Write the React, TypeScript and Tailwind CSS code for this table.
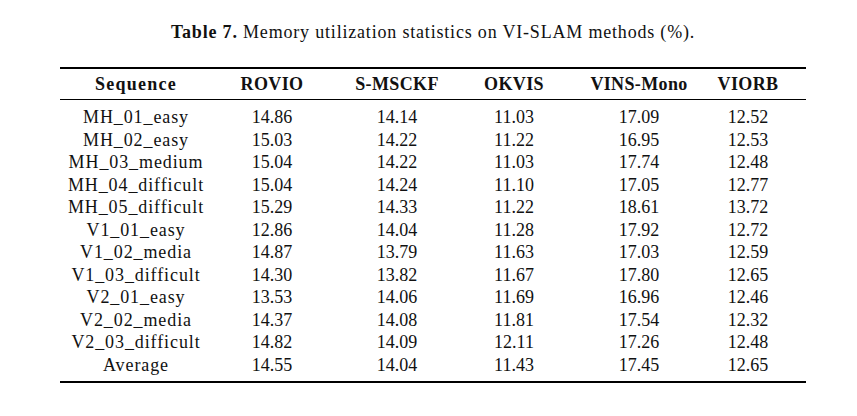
import React from 'react';

const headers = ['Sequence', 'ROVIO', 'S-MSCKF', 'OKVIS', 'VINS-Mono', 'VIORB'];

const rows: string[][] = [
  ['MH_01_easy', '14.86', '14.14', '11.03', '17.09', '12.52'],
  ['MH_02_easy', '15.03', '14.22', '11.22', '16.95', '12.53'],
  ['MH_03_medium', '15.04', '14.22', '11.03', '17.74', '12.48'],
  ['MH_04_difficult', '15.04', '14.24', '11.10', '17.05', '12.77'],
  ['MH_05_difficult', '15.29', '14.33', '11.22', '18.61', '13.72'],
  ['V1_01_easy', '12.86', '14.04', '11.28', '17.92', '12.72'],
  ['V1_02_media', '14.87', '13.79', '11.63', '17.03', '12.59'],
  ['V1_03_difficult', '14.30', '13.82', '11.67', '17.80', '12.65'],
  ['V2_01_easy', '13.53', '14.06', '11.69', '16.96', '12.46'],
  ['V2_02_media', '14.37', '14.08', '11.81', '17.54', '12.32'],
  ['V2_03_difficult', '14.82', '14.09', '12.11', '17.26', '12.48'],
  ['Average', '14.55', '14.04', '11.43', '17.45', '12.65'],
];

const cols = 'grid grid-cols-[152px_120px_130px_104px_146px_72px]';

export default function App() {
  return (
    <div className="w-[857px] h-[416px] bg-white text-[#111] font-['Liberation_Serif',serif] overflow-hidden">
      <div className="pt-[21px] pl-[9px] h-[43px] text-center text-[18px] leading-[22px] tracking-[0.045em]">
        <span className="font-bold">Table 7.</span> Memory utilization statistics on VI-SLAM methods (%).
      </div>

      <div className="ml-[60px] mt-[24px] w-[746px] border-t-2 border-b-2 border-black pb-[5px]">
        <div className={`${cols} h-[31px] items-center border-b border-black text-[18px] font-bold`}>
          {headers.map((h, i) => (
            <div key={h} className={`text-center whitespace-nowrap ${i === 0 ? 'tracking-[0.07em]' : 'tracking-[0.02em]'}`}>
              {h}
            </div>
          ))}
        </div>

        <div className="pt-[6px]">
          {rows.map((r) => (
            <div key={r[0]} className={`${cols} h-[22.5px] items-center text-[18px] leading-[22px]`}>
              {r.map((c, i) => (
                <div key={i} className={`text-center whitespace-nowrap ${i === 0 ? 'tracking-[0.05em]' : ''}`}>
                  {c}
                </div>
              ))}
            </div>
          ))}
        </div>
      </div>
    </div>
  );
}
